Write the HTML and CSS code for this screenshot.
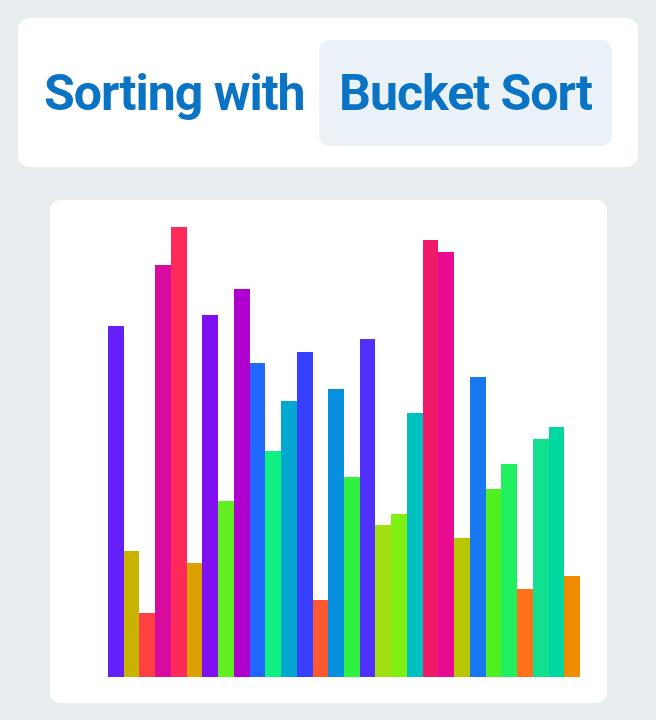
FILE: index.html
```html
<!DOCTYPE html>
<html>
<head>
<meta charset="utf-8">
<link rel="stylesheet" href="styles.css">
</head>
<body>
<header class="title-card">
  <h1 class="title-text">Sorting with</h1>
  <div class="algo-pill"><span class="algo-name">Bucket Sort</span></div>
</header>
<main class="chart-card">
  <div class="bars">
    <div class="bar" style="height:351px;background:#6420f8"></div>
    <div class="bar" style="height:126px;background:#c8b400"></div>
    <div class="bar" style="height:64px;background:#ff4040"></div>
    <div class="bar" style="height:412px;background:#d80aa0"></div>
    <div class="bar" style="height:450px;background:#ff2a58"></div>
    <div class="bar" style="height:114px;background:#dca000"></div>
    <div class="bar" style="height:362px;background:#8010f0"></div>
    <div class="bar" style="height:176px;background:#60f020"></div>
    <div class="bar" style="height:388px;background:#b000d0"></div>
    <div class="bar" style="height:314px;background:#2068ff"></div>
    <div class="bar" style="height:226px;background:#10f080"></div>
    <div class="bar" style="height:276px;background:#00a8d0"></div>
    <div class="bar" style="height:325px;background:#3840ff"></div>
    <div class="bar" style="height:77px;background:#ff5830"></div>
    <div class="bar" style="height:288px;background:#0890e0"></div>
    <div class="bar" style="height:200px;background:#30f040"></div>
    <div class="bar" style="height:338px;background:#5030ff"></div>
    <div class="bar" style="height:152px;background:#a0e010"></div>
    <div class="bar" style="height:163px;background:#80f010"></div>
    <div class="bar" style="height:264px;background:#00c0c0"></div>
    <div class="bar" style="height:437px;background:#f01a68"></div>
    <div class="bar" style="height:425px;background:#e80a90"></div>
    <div class="bar" style="height:139px;background:#b8c800"></div>
    <div class="bar" style="height:300px;background:#1878f0"></div>
    <div class="bar" style="height:188px;background:#50f020"></div>
    <div class="bar" style="height:213px;background:#20f060"></div>
    <div class="bar" style="height:88px;background:#ff7018"></div>
    <div class="bar" style="height:238px;background:#10e090"></div>
    <div class="bar" style="height:250px;background:#00d8a0"></div>
    <div class="bar" style="height:101px;background:#f08c00"></div>
  </div>
</main>
</body>
</html>
```
FILE: styles.css
```css
html, body {
  margin: 0;
  padding: 0;
}
body {
  background: #e8edf0;
  font-family: Roboto, "Liberation Sans", sans-serif;
  padding: 18px 18px 0 18px;
  width: 656px;
  box-sizing: border-box;
}
.title-card {
  background: #ffffff;
  border-radius: 12px;
  height: 149px;
  box-sizing: border-box;
  padding: 22px 26px 22px 26px;
  display: flex;
  align-items: center;
  gap: 14px;
}
.title-text {
  margin: 0;
  font-size: 50px;
  font-weight: 700;
  letter-spacing: -1px;
  color: #0a73c4;
  white-space: nowrap;
  flex: 1;
  min-width: 0;
}
.algo-pill {
  background: #eaf2f8;
  border-radius: 10px;
  height: 106px;
  width: 293px;
  flex-shrink: 0;
  box-sizing: border-box;
  display: flex;
  align-items: center;
  justify-content: center;
}
.algo-name {
  font-size: 50px;
  font-weight: 700;
  letter-spacing: -1px;
  color: #0a73c4;
  white-space: nowrap;
}
.chart-card {
  margin: 33px 31px 0 32px;
  background: #ffffff;
  border-radius: 10px;
  height: 503px;
  box-sizing: border-box;
  padding: 27px 26px 26px 58px;
}
.bars {
  display: flex;
  align-items: flex-end;
  width: 472px;
  height: 450px;
}
.bar {
  flex: 1;
}
```
